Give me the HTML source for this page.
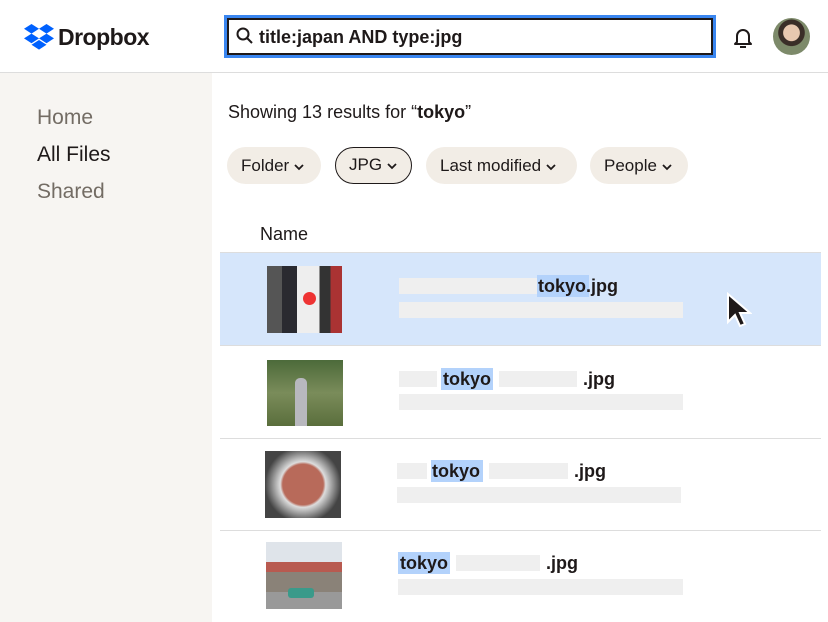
<!DOCTYPE html>
<html><head><style>
*{margin:0;padding:0;box-sizing:border-box}
body{width:828px;height:622px;overflow:hidden;background:#fff;font-family:"Liberation Sans",sans-serif;color:#1e1919;position:relative}
.a{position:absolute}
.bar{position:absolute;background:#efefef;height:16px}
.hl{position:absolute;background:#b3d2fb;height:22px}
.t{position:absolute;font-size:18px;line-height:22px;white-space:nowrap}
.pill{position:absolute;top:147px;height:37px;border-radius:19px;background:#f2ede6;font-size:17px;line-height:37px;padding-left:14px;color:#1e1919}
.pill svg{vertical-align:middle;margin-left:4px}
.sep{position:absolute;left:220px;width:601px;height:1px;background:#ddd}
.thumb{position:absolute;overflow:hidden}
</style></head><body>
<svg class="a" style="left:24px;top:24px" width="30" height="26" viewBox="0 0 30 26"><g fill="#0061fe"><path d="M7.5 0L0 4.8l7.5 4.8L15 4.8z"/><path d="M22.5 0L15 4.8l7.5 4.8L30 4.8z"/><path d="M0 14.4l7.5 4.8L15 14.4 7.5 9.6z"/><path d="M22.5 9.6L15 14.4l7.5 4.8L30 14.4z"/><path d="M7.5 20.8L15 25.6l7.5-4.8L15 16z"/></g></svg>
<div class="t" style="left:58px;top:24px;font-size:23px;line-height:26px;font-weight:bold;letter-spacing:-0.5px">Dropbox</div>
<div class="a" style="left:224px;top:15px;width:492px;height:43px;border:3px solid #3a86f0;background:#fff"><div style="position:absolute;inset:0;border:2px solid #1e1919"></div></div>
<svg class="a" style="left:236px;top:27px" width="18" height="18" viewBox="0 0 18 18"><circle cx="7" cy="7" r="5.5" fill="none" stroke="#1e1919" stroke-width="2"/><path d="M11 11l5 5" stroke="#1e1919" stroke-width="2"/></svg>
<div class="t" style="left:259px;top:26px;font-size:18px;font-weight:bold">title:japan AND type:jpg</div>
<svg class="a" style="left:732px;top:26px" width="22" height="24" viewBox="0 0 22 24"><path d="M5 16V10a6 6 0 0112 0v6l2 2H3z" fill="none" stroke="#1e1919" stroke-width="2" stroke-linejoin="round"/><path d="M8 21h6" stroke="#1e1919" stroke-width="2"/></svg>
<div class="a" style="left:773px;top:18px;width:37px;height:37px;border-radius:50%;background:radial-gradient(circle at 50% 40%,#e8c8b0 0 28%,#3a2e28 30% 45%,#7d8a6a 47%)"></div>
<div class="a" style="left:0;top:72px;width:828px;height:1px;background:#ddd"></div>
<div class="a" style="left:0;top:73px;width:212px;height:549px;background:#f7f5f2"></div>
<div class="t" style="left:37px;top:106px;font-size:21px;line-height:24px;color:#736c64">Home</div>
<div class="t" style="left:37px;top:143px;font-size:21px;line-height:24px">All Files</div>
<div class="t" style="left:37px;top:180px;font-size:21px;line-height:24px;color:#736c64">Shared</div>
<div class="t" style="left:228px;top:101px;font-size:18px">Showing 13 results for “<b>tokyo</b>”</div>
<div class="pill" style="left:227px;width:94px">Folder<svg width="12" height="8" viewBox="0 0 12 8"><path d="M2 2l4 4 4-4" fill="none" stroke="#1e1919" stroke-width="1.8"/></svg></div>
<div class="pill" style="left:335px;width:77px;border:1.5px solid #1e1919;line-height:34px;padding-left:13px">JPG<svg width="12" height="8" viewBox="0 0 12 8"><path d="M2 2l4 4 4-4" fill="none" stroke="#1e1919" stroke-width="1.8"/></svg></div>
<div class="pill" style="left:426px;width:151px">Last modified<svg width="12" height="8" viewBox="0 0 12 8"><path d="M2 2l4 4 4-4" fill="none" stroke="#1e1919" stroke-width="1.8"/></svg></div>
<div class="pill" style="left:590px;width:98px">People<svg width="12" height="8" viewBox="0 0 12 8"><path d="M2 2l4 4 4-4" fill="none" stroke="#1e1919" stroke-width="1.8"/></svg></div>
<div class="t" style="left:260px;top:223px;font-size:18px">Name</div>
<div class="sep" style="top:252px"></div>
<div class="a" style="left:220px;top:253px;width:601px;height:92px;background:#d6e6fb"></div>
<div class="sep" style="top:345px"></div>
<div class="sep" style="top:438px"></div>
<div class="sep" style="top:530px"></div>
<div class="thumb" style="left:267px;top:266px;width:75px;height:67px;background:linear-gradient(90deg,#555 0 20%,#2a2a30 20% 40%,#eee 40% 70%,#333 70% 85%,#a33 85%)"><div style="position:absolute;left:36px;top:26px;width:13px;height:13px;border-radius:50%;background:#e33"></div></div>
<div class="bar" style="left:399px;top:278px;width:138px"></div>
<div class="hl" style="left:537px;top:275px;width:52px"></div>
<div class="t" style="left:538px;top:275px;font-weight:bold">tokyo.jpg</div>
<div class="bar" style="left:399px;top:302px;width:284px"></div>
<svg class="a" style="left:726px;top:292px" width="26" height="38" viewBox="0 0 26 38"><path d="M2 2v28l7-7 5 11 5-2-5-11h10z" fill="#1e1919" stroke="#fff" stroke-width="2"/></svg>
<div class="thumb" style="left:267px;top:360px;width:76px;height:66px;background:linear-gradient(180deg,#4c6a3a,#7a8c5a 50%,#5a6e3c)"><div style="position:absolute;left:28px;top:18px;width:12px;height:48px;background:#b8b8be;border-radius:5px 5px 0 0"></div></div>
<div class="bar" style="left:399px;top:371px;width:38px"></div>
<div class="hl" style="left:441px;top:368px;width:52px"></div>
<div class="t" style="left:443px;top:368px;font-weight:bold">tokyo</div>
<div class="bar" style="left:499px;top:371px;width:78px"></div>
<div class="t" style="left:583px;top:368px;font-weight:bold">.jpg</div>
<div class="bar" style="left:399px;top:394px;width:284px"></div>
<div class="thumb" style="left:265px;top:451px;width:76px;height:67px;background:radial-gradient(circle at 50% 50%,#b86a5a 0 40%,#ddd 45%,#444 75%)"></div>
<div class="bar" style="left:397px;top:463px;width:30px"></div>
<div class="hl" style="left:431px;top:460px;width:52px"></div>
<div class="t" style="left:432px;top:460px;font-weight:bold">tokyo</div>
<div class="bar" style="left:489px;top:463px;width:79px"></div>
<div class="t" style="left:574px;top:460px;font-weight:bold">.jpg</div>
<div class="bar" style="left:397px;top:487px;width:284px"></div>
<div class="thumb" style="left:266px;top:542px;width:76px;height:67px;background:linear-gradient(180deg,#dfe4ea 0 30%,#b85a50 30% 45%,#8a8278 45% 75%,#999 75%)"><div style="position:absolute;left:22px;top:46px;width:26px;height:10px;background:#3a9a8a;border-radius:3px"></div></div>
<div class="hl" style="left:398px;top:552px;width:52px"></div>
<div class="t" style="left:400px;top:552px;font-weight:bold">tokyo</div>
<div class="bar" style="left:456px;top:555px;width:84px"></div>
<div class="t" style="left:546px;top:552px;font-weight:bold">.jpg</div>
<div class="bar" style="left:398px;top:579px;width:285px"></div>
</body></html>
